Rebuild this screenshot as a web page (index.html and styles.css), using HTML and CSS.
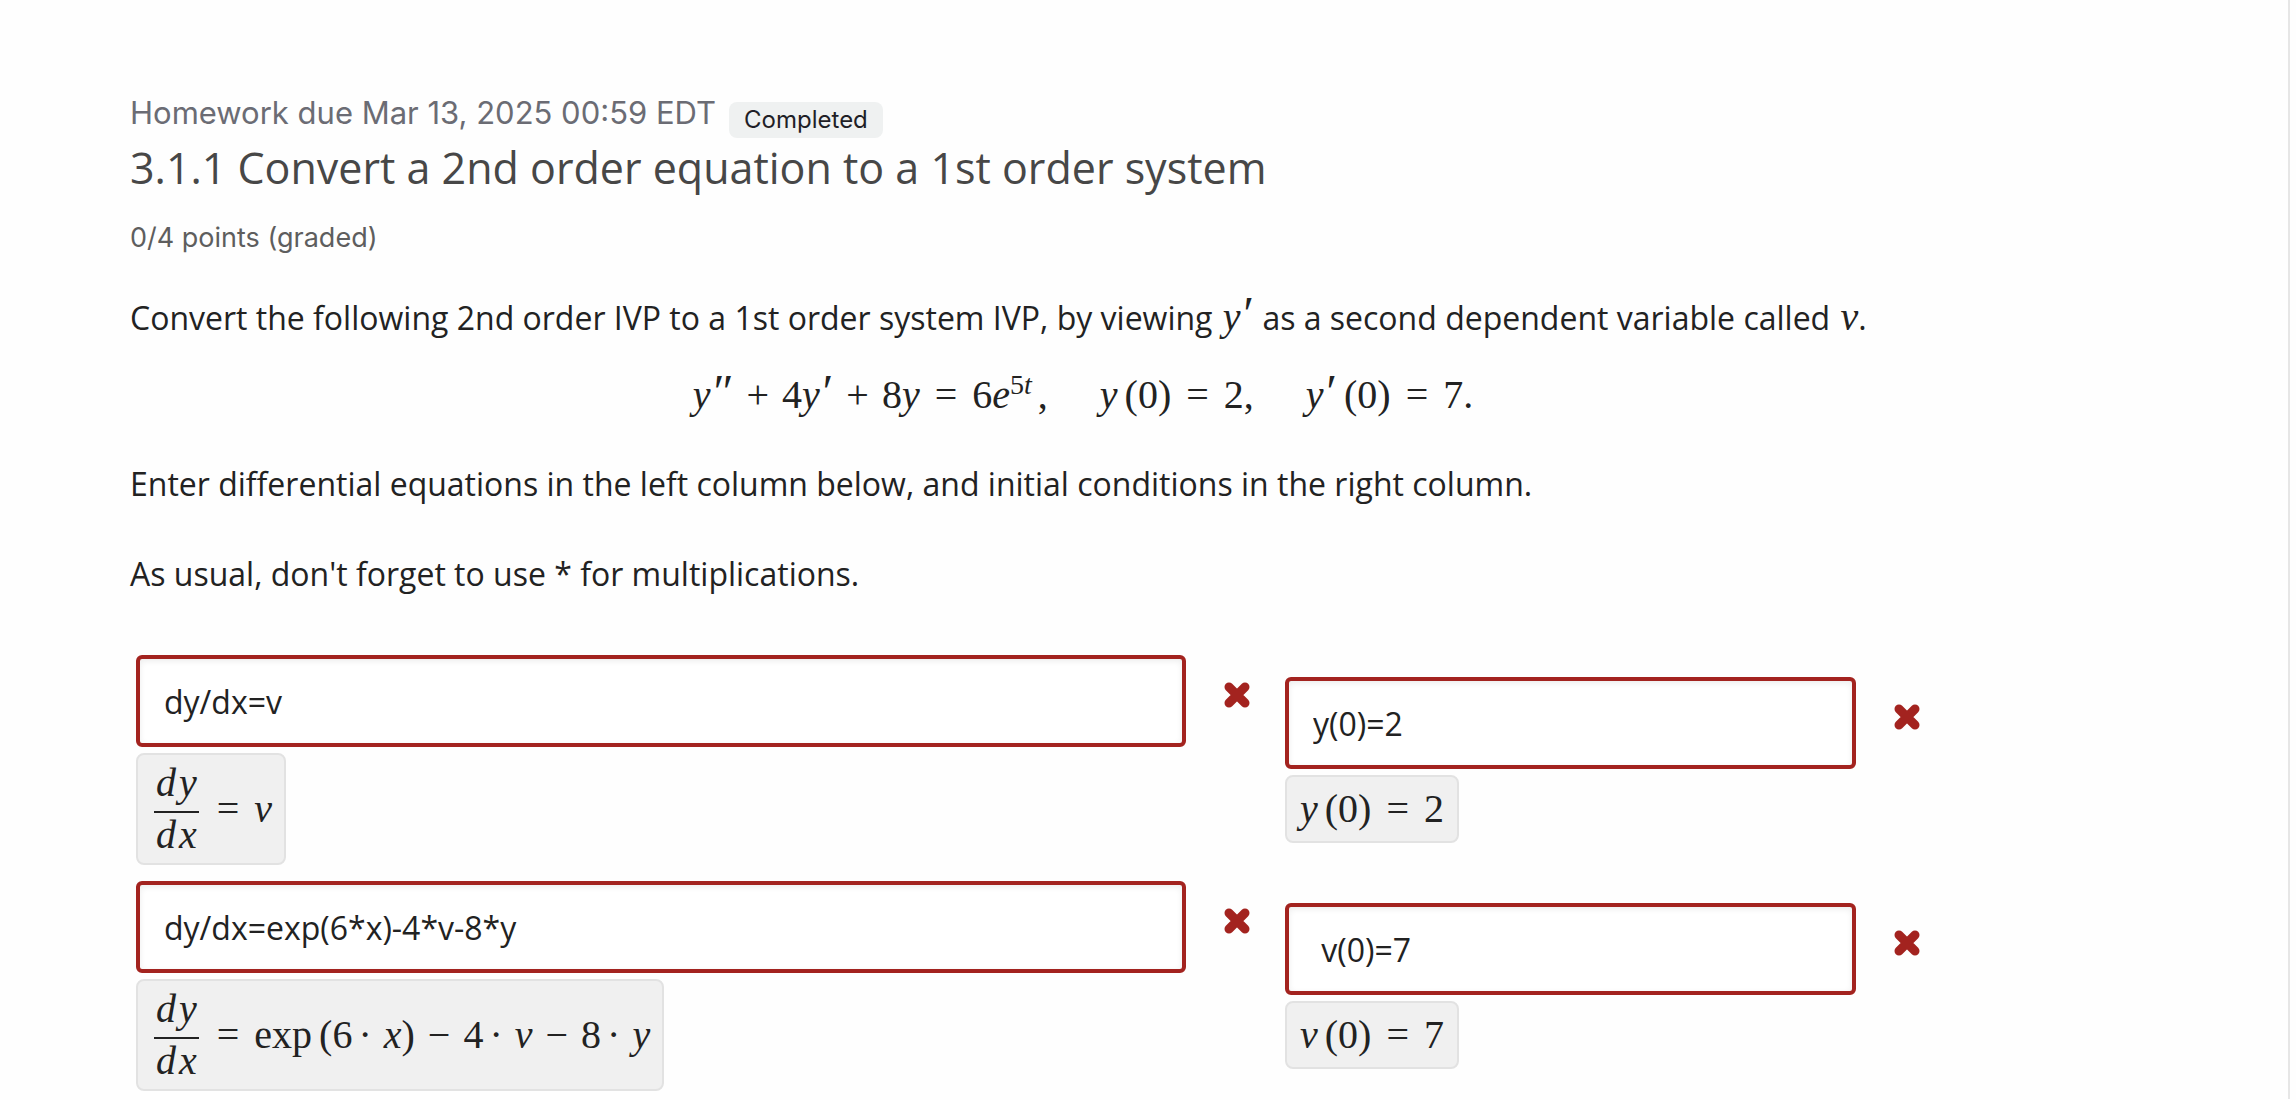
FILE: index.html
```html
<!DOCTYPE html>
<html lang="en">
<head>
<meta charset="utf-8">
<title>3.1.1 Convert a 2nd order equation to a 1st order system</title>
<link rel="stylesheet" href="styles.css">
</head>
<body>
<svg class="sprite" aria-hidden="true">
  <symbol id="cross" viewBox="0 0 26 26"><path d="M5 5 21 21M21 5 5 21" stroke="#a3231f" stroke-width="9" stroke-linecap="round"/></symbol>
</svg>
<main class="page">
  <header class="header">
    <div class="due"><span>Homework due Mar 13, 2025 00:59 EDT</span><span class="badge">Completed</span></div>
    <h1 class="title">3.1.1 Convert a 2nd order equation to a 1st order system</h1>
    <p class="points">0/4 points (graded)</p>
  </header>
  <p class="text">Convert the following 2nd order IVP to a 1st order system IVP, by viewing <span class="math"><i>y</i><i class="prime">′</i></span> as a second dependent variable called <span class="math"><i>v</i></span>.</p>
  <p class="math display"><i>y</i><i class="prime">″</i><span class="op">+</span>4<i>y</i><i class="prime">′</i><span class="op">+</span>8<i>y</i><span class="rel">=</span>6<i>e</i><sup>5<i>t</i></sup>,<span class="quad"></span><i>y</i><span class="fn">(0)</span><span class="rel">=</span>2,<span class="quad"></span><i>y</i><i class="prime">′</i><span class="fn">(0)</span><span class="rel">=</span>7.</p>
  <p class="text">Enter differential equations in the left column below, and initial conditions in the right column.</p>
  <p class="text">As usual, don't forget to use * for multiplications.</p>
  <form class="answers">
    <div class="cell wide">
      <div class="field"><input class="answer" type="text" aria-label="First differential equation" value="dy/dx=v"><svg class="cross" role="img" aria-label="incorrect"><use href="#cross"/></svg></div>
      <div class="math preview"><span class="frac"><span class="num"><i>d</i><i>y</i></span><span class="den"><i>d</i><i>x</i></span></span><span class="rel">=</span><i>v</i></div>
    </div>
    <div class="cell narrow">
      <div class="field"><input class="answer" type="text" aria-label="First initial condition" value="y(0)=2"><svg class="cross" role="img" aria-label="incorrect"><use href="#cross"/></svg></div>
      <div class="math preview"><i>y</i><span class="fn">(0)</span><span class="rel">=</span>2</div>
    </div>
    <div class="cell wide">
      <div class="field"><input class="answer" type="text" aria-label="Second differential equation" value="dy/dx=exp(6*x)-4*v-8*y"><svg class="cross" role="img" aria-label="incorrect"><use href="#cross"/></svg></div>
      <div class="math preview"><span class="frac"><span class="num"><i>d</i><i>y</i></span><span class="den"><i>d</i><i>x</i></span></span><span class="rel">=</span>exp<span class="fn">(6</span><span class="dot">·</span><i>x</i>)<span class="op">−</span>4<span class="dot">·</span><i>v</i><span class="op">−</span>8<span class="dot">·</span><i>y</i></div>
    </div>
    <div class="cell narrow">
      <div class="field"><input class="answer" type="text" aria-label="Second initial condition" value=" v(0)=7"><svg class="cross" role="img" aria-label="incorrect"><use href="#cross"/></svg></div>
      <div class="math preview"><i>v</i><span class="fn">(0)</span><span class="rel">=</span>7</div>
    </div>
  </form>
</main>
</body>
</html>
```
FILE: styles.css
```css
* { box-sizing: border-box; }
body { margin: 0; background: #fefefe; color: #222; font-family: "Open Sans", sans-serif; }
.sprite { display: none; }
.page { margin-right: 6px; padding: 92px 252px 8px 130px; border-right: 2px solid #e6e6e6; }
.header { margin-bottom: 33px; }
.due { display: flex; align-items: flex-start; gap: 13px; font: 31px/42px Inter, sans-serif; color: #6b6c74; }
.badge { margin-top: 10px; padding: 0 15px; border-radius: 8px; background: #eff1f1; color: #1f1f27; font-size: 24px; line-height: 36px; }
.title { margin: 0; font-size: 43px; line-height: 60px; font-weight: 400; color: #474747; }
.points { margin: 18px 0 0; font: 27px/44px Inter, sans-serif; color: #5e5e5e; }
.text { margin: 0; font-size: 32px; line-height: 50px; }
.text + .text { margin-top: 40px; }
.math { font-family: "Liberation Serif", serif; font-size: 40px; line-height: 44px; }
.text .math { line-height: 40px; margin-left: 2px; }
.math .prime { margin-right: 3px; font-size: 48px; line-height: 0; }
.display { margin: 28px 0 42px; text-align: center; white-space: nowrap; }
.display sup { font-size: 28px; line-height: 1; vertical-align: 14px; margin-right: 6px; }
.op { margin: 0 13px; }
.dot { margin: 0 12px 0 6px; }
.rel { margin: 0 15px; }
.fn { margin-left: 7px; }
.quad { display: inline-block; width: 52px; }
.answers { display: grid; grid-template-columns: minmax(0, 1149fr) minmax(0, 751fr); row-gap: 16px; align-items: center; margin: 56px 0 0 6px; }
.field { display: flex; align-items: flex-start; gap: 38px; }
.wide .field { padding-right: 35px; }
.narrow .field { padding-right: 116px; }
.answer { flex: 1; min-width: 0; height: 92px; padding: 0 24px; border: 4px solid #a3231f; border-radius: 6px; background: #fff; box-shadow: inset 0 2px 6px rgba(0, 0, 0, .08); color: #222; font: 32px "Open Sans", sans-serif; }
.cross { flex: none; width: 26px; height: 26px; margin-top: 27px; }
.preview { display: flex; align-items: center; width: max-content; margin-top: 6px; padding: 10px 13px; border: 2px solid #e2e2e2; border-radius: 8px; background: #f0f0f0; }
.wide .preview { padding: 6px 12px; }
.frac { display: flex; flex-direction: column; gap: 6px; margin: 0 3px 0 4px; }
.num, .den { display: flex; justify-content: center; gap: 3px; }
.den { border-top: 2px solid #222; padding: 0 2px; }
```
